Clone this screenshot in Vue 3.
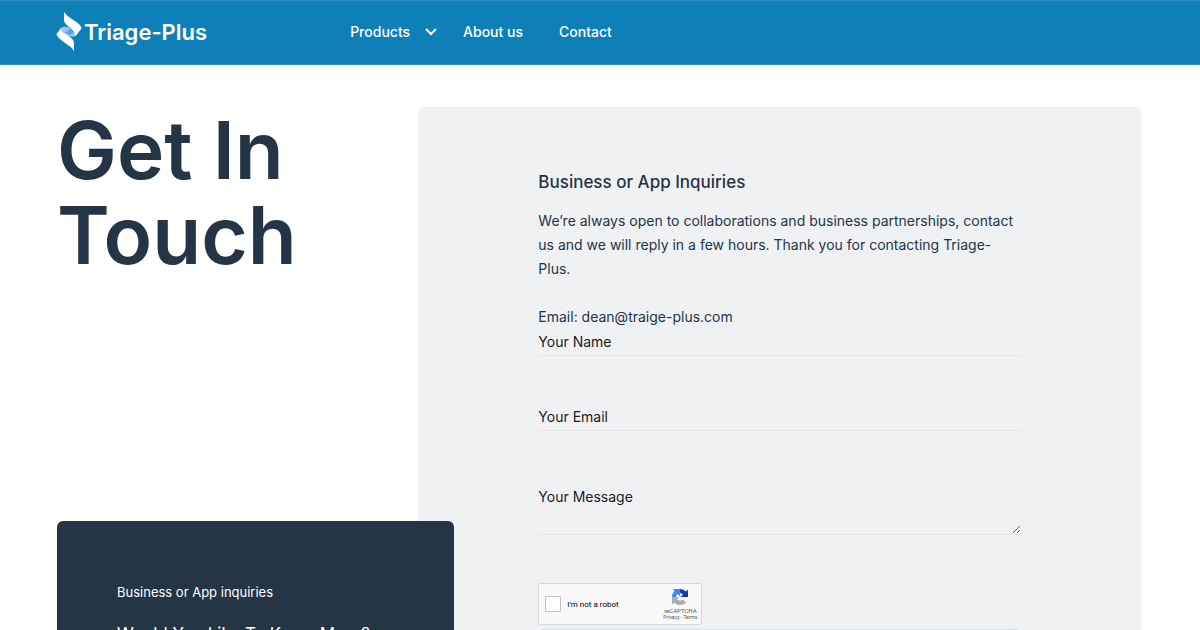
<template>
  <div class="page">
    <header class="topbar">
      <a class="brand" href="#">
        <svg class="brand-mark" viewBox="48 36 78 120" aria-hidden="true">
          <path d="M62 86 C68 80 76 79 84 82 L112 92 C114 100 108 108 98 110 L84 108 L62 98 Z" fill="#9dc6ee" />
          <path d="M76 98 L92 86 L108 92 L90 106 Z" fill="#5fa3dc" />
          <path d="M72 36 C80 48 94 56 106 64 C116 71 122 77 125 85 L105 110 C107 99 101 92 92 84 C80 76 71 68 72 56 Z" fill="#fff" />
          <path d="M66 80 L49 103 C53 114 64 121 76 130 C88 138 98 144 102 154 L102 128 C100 115 86 108 75 101 C65 95 61 89 66 80 Z" fill="#fff" />
        </svg>
        <span class="brand-name">Triage-Plus</span>
      </a>
      <nav class="nav">
        <button class="nav-item dropdown" type="button">
          Products
          <svg class="chevron" viewBox="0 0 12 8" aria-hidden="true">
            <path d="M1 1 L6 6 L11 1" />
          </svg>
        </button>
        <a v-for="link in links" :key="link" class="nav-item" href="#">{{ link }}</a>
      </nav>
    </header>

    <main class="content">
      <section class="intro">
        <h1>Get In Touch</h1>
        <div class="more-card">
          <p>Business or App inquiries</p>
          <h3>Would You Like To Know More?</h3>
        </div>
      </section>

      <section class="contact-card">
        <h2>Business or App Inquiries</h2>
        <p class="lead">
          We’re always open to collaborations and business partnerships, contact
          us and we will reply in a few hours. Thank you for contacting Triage-Plus.
        </p>
        <p class="lead email">Email: dean@traige-plus.com</p>

        <form @submit.prevent>
          <input v-model="form.name" class="field" type="text" placeholder="Your Name" aria-label="Your Name" />
          <input v-model="form.email" class="field" type="email" placeholder="Your Email" aria-label="Your Email" />
          <textarea v-model="form.message" class="field message" placeholder="Your Message" aria-label="Your Message"></textarea>

          <div class="captcha">
            <input id="robot" v-model="form.human" type="checkbox" />
            <label for="robot">I'm not a robot</label>
            <div class="captcha-brand">
              <svg viewBox="0 0 18 18" aria-hidden="true">
                <path d="M9 1 A8 8 0 0 1 15 3.500 L17 1.500 L17 9 L9.500 9 L12 6.500 A4 4 0 0 0 9 5 Z" fill="#1c3aa9" />
                <path d="M1 9 A8 8 0 0 1 3.500 3 L2 1 L9 1 L9 8.500 L6.500 6 A4 4 0 0 0 5 9 Z" fill="#4285f4" />
                <path d="M1 9 L8 9 L6 11 A4 4 0 0 0 12 11.500 L15 14.500 A8 8 0 0 1 3.200 14.500 L1 16.500 Z" fill="#ababab" />
              </svg>
              <span class="captcha-name">reCAPTCHA</span>
              <span class="captcha-links"><a href="#">Privacy</a> - <a href="#">Terms</a></span>
            </div>
          </div>

          <button class="send" type="submit">Send</button>
        </form>
      </section>
    </main>
  </div>
</template>

<script setup>
import { reactive } from 'vue'

const links = ['About us', 'Contact']

const form = reactive({
  name: '',
  email: '',
  message: '',
  human: false
})
</script>

<style>
body {
  background: #fff;
}
</style>

<style scoped>
.page {
  font-family: Inter, "Liberation Sans", sans-serif;
  color: #243546;
}

.page * {
  box-sizing: border-box;
}

h1,
h2,
h3,
p {
  margin: 0;
}

a {
  color: inherit;
  text-decoration: none;
}

.topbar {
  display: flex;
  align-items: center;
  height: 65px;
  padding: 0 59px 2px 56px;
  background: #0f7fb8;
  border-top: 1px solid #2b8bc2;
  border-bottom: 1px solid #2b8bc2;
}

.brand {
  display: flex;
  align-items: center;
  gap: 2px;
  color: #fff;
}

.brand-mark {
  width: 26px;
  height: 40px;
}

.brand-name {
  font-size: 22px;
  font-weight: 600;
}

.nav {
  display: flex;
  margin-left: 125px;
}

.nav-item {
  display: flex;
  align-items: center;
  padding: 0 18px;
  border: 0;
  background: none;
  font-family: inherit;
  font-size: 14px;
  font-weight: 500;
  line-height: 24px;
  color: #fff;
}

.dropdown {
  gap: 15px;
  padding-right: 8px;
  cursor: pointer;
}

.chevron {
  width: 12px;
  height: 8px;
  fill: none;
  stroke: #fff;
  stroke-width: 2;
}

.content {
  display: grid;
  grid-template-columns: 1fr 2fr;
  padding: 42px 59px 0 57px;
}

.intro {
  min-width: 0;
}

h1 {
  font-size: 80px;
  font-weight: 600;
  line-height: 85px;
}

.more-card {
  position: relative;
  z-index: 1;
  width: 110%;
  margin-top: 244px;
  padding: 60px;
  border-radius: 6px;
  background: #243546;
  color: #fff;
}

.more-card p {
  font-size: 13px;
  line-height: 22px;
}

.more-card h3 {
  margin-top: 16px;
  font-size: 17px;
  font-weight: 400;
  line-height: 30px;
}

.contact-card {
  padding: 60px 120px;
  border-radius: 6px;
  background: #f0f1f3;
}

h2 {
  margin-bottom: 12px;
  font-size: 17px;
  font-weight: 500;
  line-height: 30px;
}

.lead {
  font-size: 14px;
  line-height: 24px;
}

.email {
  margin-top: 24px;
}

form {
  display: flex;
  flex-direction: column;
}

.field {
  width: 100%;
  height: 27px;
  margin: 0 0 48px;
  padding: 0 0 2px;
  border: 0;
  border-bottom: 1px solid #e3e5e7;
  border-radius: 0;
  outline: 0;
  background: transparent;
  font-family: inherit;
  font-size: 14px;
  line-height: 20px;
  color: #1a1b1f;
}

.field::placeholder {
  color: #1a1b1f;
  opacity: 1;
}

.message {
  height: 56px;
  padding-top: 8px;
  resize: vertical;
}

.captcha {
  display: flex;
  align-items: center;
  width: 164px;
  height: 42px;
  padding: 0 4px 0 6px;
  border: 1px solid #d6d7d9;
  border-radius: 2px;
  background: #f9f9f9;
  font-family: Roboto, sans-serif;
}

.captcha input {
  appearance: none;
  width: 16px;
  height: 16px;
  margin: 0 6px 0 0;
  border: 1px solid #c1c1c1;
  border-radius: 1px;
  background: #fff;
}

.captcha label {
  font-size: 8px;
  color: #000;
}

.captcha-brand {
  display: flex;
  flex-direction: column;
  align-items: center;
  margin-left: auto;
  color: #555;
}

.captcha-brand svg {
  width: 18px;
  height: 18px;
}

.captcha-name {
  margin-top: 1px;
  font-size: 6px;
  line-height: 7px;
}

.captcha-links {
  font-size: 5px;
  line-height: 6px;
}

.send {
  height: 48px;
  margin-top: 4px;
  border: 1px solid #cfe3f0;
  border-radius: 6px;
  background: #0f7fb8;
  font-family: inherit;
  font-size: 15px;
  color: #fff;
}
</style>
